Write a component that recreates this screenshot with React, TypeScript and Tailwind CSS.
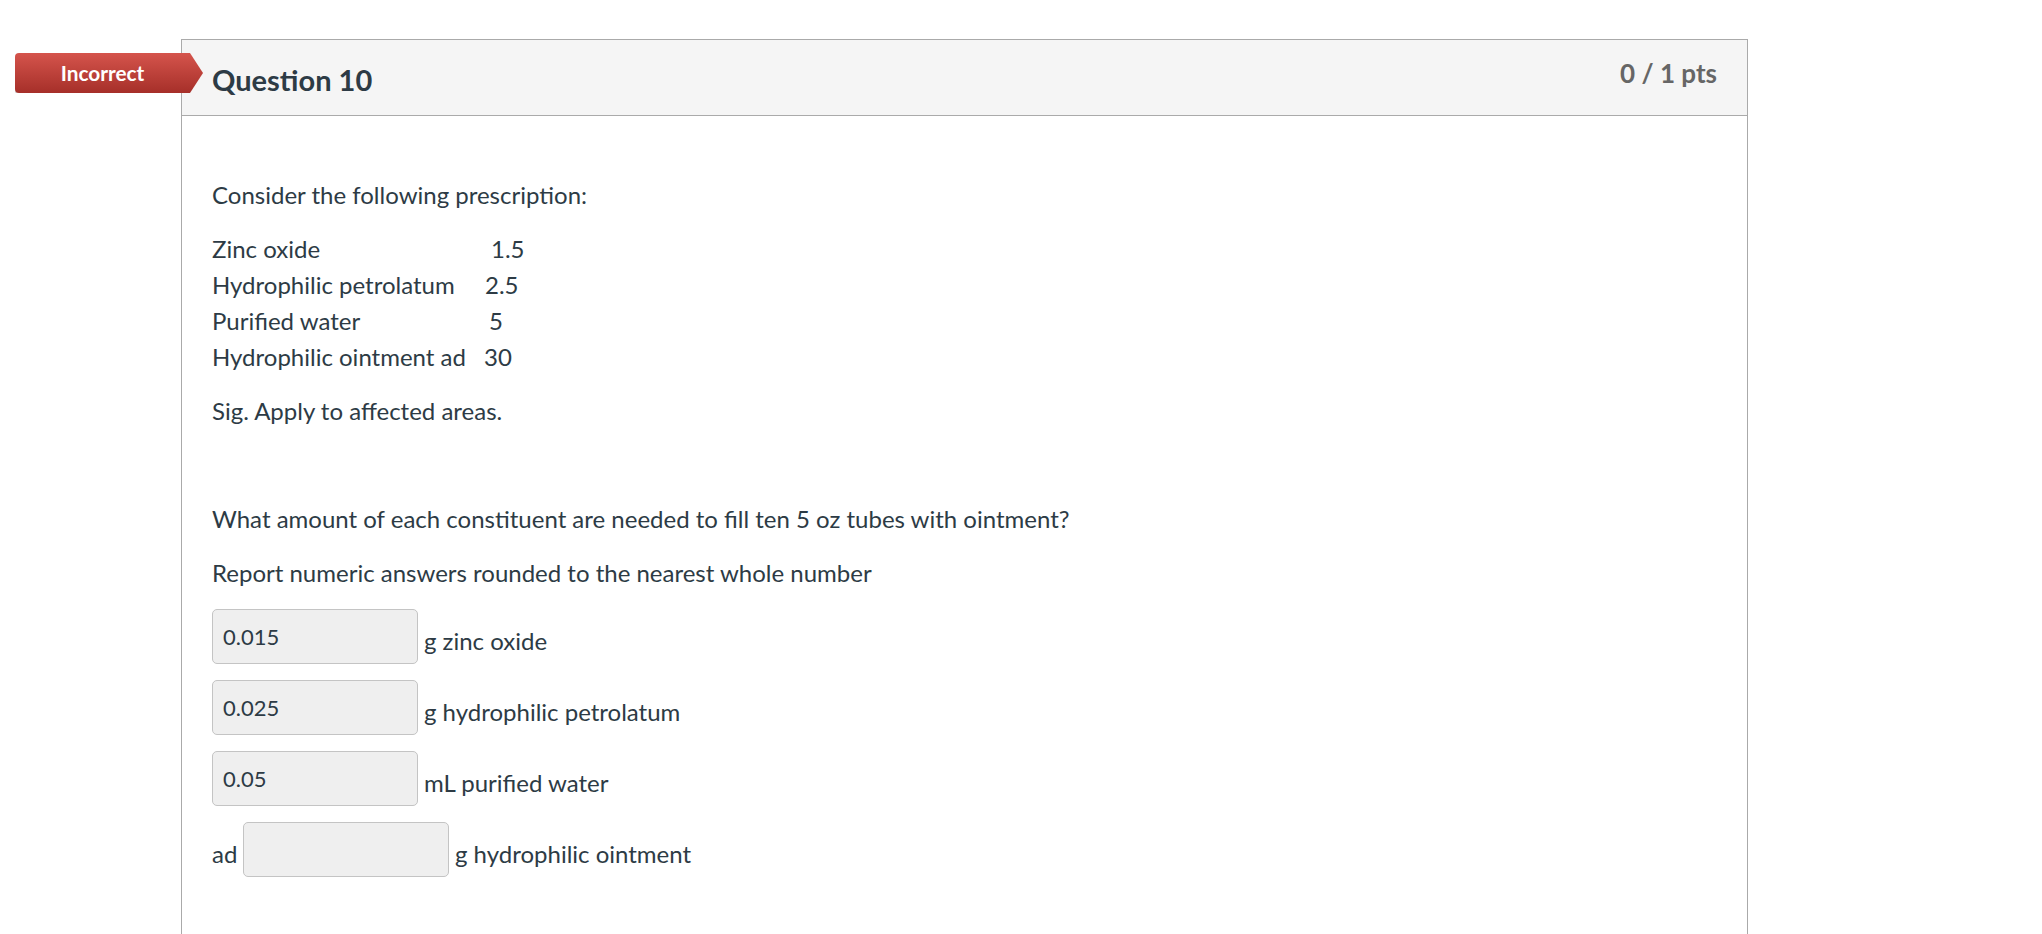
import React from "react";

const rows = [
  { label: "Zinc oxide", value: "1.5", w: "w-[279px]" },
  { label: "Hydrophilic petrolatum", value: "2.5", w: "w-[273px]" },
  { label: "Purified water", value: "5", w: "w-[277px]" },
  { label: "Hydrophilic ointment ad", value: "30", w: "w-[272px]" },
];

function Field({ value }: { value: string }) {
  return (
    <input
      readOnly
      value={value}
      className="w-[206px] h-[55px] shrink-0 rounded-[5px] border border-[#c4c4c4] bg-[#efefef] pl-[10px] text-[22px] text-[#2d3b45] font-['Lato',sans-serif] outline-none"
    />
  );
}

export default function App() {
  return (
    <div className="relative h-[934px] overflow-hidden bg-white pl-[181px] pt-[39px] font-['Lato',sans-serif] text-[#2d3b45]">
      <div className="absolute left-[15px] top-[53px] z-10 flex h-[40px] w-[188px] items-center justify-center rounded-l-[4px] bg-gradient-to-b from-[#d5544c] to-[#a62f29] pr-[13px] text-[20.8px] font-bold text-white shadow-[0_1px_1px_rgba(0,0,0,0.35)] [clip-path:polygon(0_0,175px_0,100%_50%,175px_100%,0_100%)]">
        Incorrect
      </div>
      <div className="min-h-[1000px] w-[1567px] border border-[#aaaaaa] bg-white">
        <div className="flex h-[76px] items-start justify-between border-b border-[#aaaaaa] bg-[#f5f5f5] px-[30px]">
          <h2 className="mt-[25px] text-[29px] leading-[29px] font-bold text-[#2d3b45]">
            Question 10
          </h2>
          <div className="mt-[20px] text-[26px] leading-[26px] font-bold text-[#666666]">
            0 / 1 pts
          </div>
        </div>
        <div className="px-[30px] pt-[61px] text-[24px] leading-[36px]">
          <p className="mb-[18px]">Consider the following prescription:</p>
          <div className="mb-[18px]">
            {rows.map((r) => (
              <div key={r.label} className="flex">
                <span className={r.w}>{r.label}</span>
                <span>{r.value}</span>
              </div>
            ))}
          </div>
          <p className="mb-[18px]">Sig. Apply to affected areas.</p>
          <p className="mb-[18px]">&nbsp;</p>
          <p className="mb-[18px]">
            What amount of each constituent are needed to fill ten 5 oz tubes with ointment?
          </p>
          <p className="mb-[18px]">Report numeric answers rounded to the nearest whole number</p>
          <div className="flex flex-col gap-[16px]">
            <div className="flex items-start">
              <Field value="0.015" />
              <span className="ml-[6px] pt-[14px]">g zinc oxide</span>
            </div>
            <div className="flex items-start">
              <Field value="0.025" />
              <span className="ml-[6px] pt-[14px]">g hydrophilic petrolatum</span>
            </div>
            <div className="flex items-start">
              <Field value="0.05" />
              <span className="ml-[6px] pt-[14px]">mL purified water</span>
            </div>
            <div className="flex items-start">
              <span className="w-[31px] shrink-0 pt-[14px]">ad</span>
              <Field value="" />
              <span className="ml-[6px] pt-[14px]">g hydrophilic ointment</span>
            </div>
          </div>
        </div>
      </div>
    </div>
  );
}
